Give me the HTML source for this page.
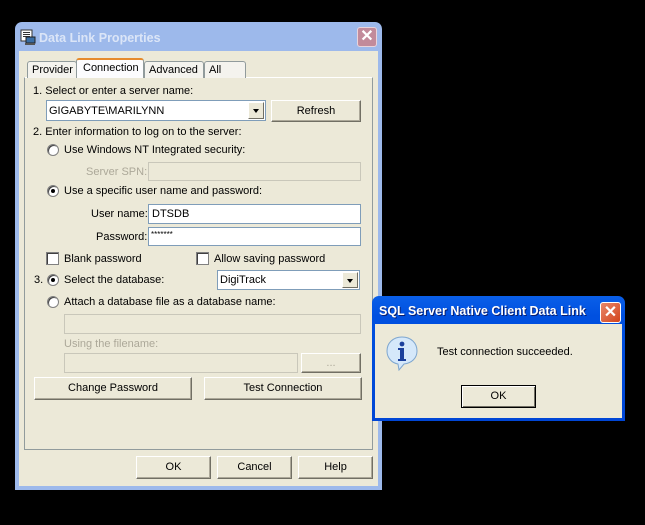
<!DOCTYPE html>
<html><head><meta charset="utf-8"><style>
*{box-sizing:border-box}
body{margin:0;width:645px;height:525px;background:#000;position:relative;overflow:hidden;font-family:"Liberation Sans",Tahoma,sans-serif;font-size:11px;color:#000}
.a{position:absolute}
.t{position:absolute;white-space:nowrap;line-height:13px}
.g{color:#aca899}
.box{position:absolute;background:#fff;border:1px solid #7f9db9}
.dis{position:absolute;background:#ece9d8;border:1px solid #c9c7ba}
.btn2{position:absolute;background:#ece9d8;border:1px solid;border-color:#fff #716f64 #716f64 #fff;box-shadow:inset -1px -1px 0 #aca899;text-align:center;font-size:11px}
.rad{position:absolute;width:12px;height:12px;border-radius:50%;background:#fff;border:1px solid #808080;box-shadow:inset 1px 1px 0 #404040}
.rad.on::after{content:"";position:absolute;left:3px;top:3px;width:4px;height:4px;border-radius:50%;background:#000}
.chk{position:absolute;width:13px;height:13px;background:#fff;border:1px solid #808080;box-shadow:inset 1px 1px 0 #404040}
.dd{position:absolute;right:1px;top:1px;bottom:1px;width:16px;background:#ece9d8;border:1px solid;border-color:#fff #716f64 #716f64 #fff}
.dd::after{content:"";position:absolute;left:4px;top:6px;border-left:3px solid transparent;border-right:3px solid transparent;border-top:4px solid #000}
</style></head><body>

<div class="a" style="left:15px;top:22px;width:367px;height:468px;background:#9db9eb;border-radius:7px 7px 0 0"></div>
<div class="a" style="left:19px;top:51px;width:359px;height:435px;background:#ece9d8"></div>
<div class="a" style="left:20px;top:29px;width:16px;height:16px">
<svg width="16" height="16"><rect x="1" y="1" width="11" height="11" fill="#fff" stroke="#333"/><rect x="3" y="3" width="7" height="1" fill="#333"/><rect x="3" y="5" width="7" height="1" fill="#333"/><rect x="3" y="7" width="7" height="1" fill="#333"/><rect x="6" y="8" width="9" height="6" fill="#3a6ea5" stroke="#222"/><rect x="5" y="14" width="10" height="2" fill="#555"/></svg></div>
<div class="t" style="left:39px;top:31px;font-size:12.5px;font-weight:bold;color:#dbe5f7;line-height:15px">Data Link Properties</div>
<div class="a" style="left:357px;top:27px;width:20px;height:20px;background:#c28b9b;border:1px solid #e9d4db;border-radius:3px;color:#fff;text-align:center;font-size:16px;line-height:18px;font-weight:bold">✕</div>

<div class="a" style="left:24px;top:77px;width:349px;height:373px;border:1px solid;border-color:#fff #919b9c #919b9c #919b9c;background:#ece9d8"></div>
<div class="a" style="left:27px;top:61px;width:50px;height:17px;border:1px solid #919b9c;border-bottom:none;background:#f4f3ee;border-radius:3px 3px 0 0"></div>
<div class="t" style="left:32px;top:64px">Provider</div>
<div class="a" style="left:76px;top:58px;width:68px;height:20px;border:1px solid #919b9c;border-bottom:none;border-top:2px solid #e68b2c;background:#fcfcfe;border-radius:3px 3px 0 0"></div>
<div class="t" style="left:83px;top:62px">Connection</div>
<div class="a" style="left:144px;top:61px;width:60px;height:17px;border:1px solid #919b9c;border-bottom:none;background:#f4f3ee;border-radius:3px 3px 0 0"></div>
<div class="t" style="left:149px;top:64px">Advanced</div>
<div class="a" style="left:204px;top:61px;width:42px;height:17px;border:1px solid #919b9c;border-bottom:none;background:#f4f3ee;border-radius:3px 3px 0 0"></div>
<div class="t" style="left:209px;top:64px">All</div>

<div class="t" style="left:33px;top:85px">1. Select or enter a server name:</div>
<div class="box" style="left:46px;top:100px;width:220px;height:21px"><div class="t" style="left:2px;top:4px">GIGABYTE\MARILYNN</div><div class="dd"></div></div>
<div class="btn2" style="left:271px;top:100px;width:90px;height:22px;line-height:20px">Refresh</div>
<div class="t" style="left:33px;top:126px">2. Enter information to log on to the server:</div>
<div class="rad" style="left:47px;top:144px"></div>
<div class="t" style="left:64px;top:144px">Use Windows NT Integrated security:</div>
<div class="t g" style="left:86px;top:166px">Server SPN:</div>
<div class="dis" style="left:148px;top:162px;width:213px;height:19px"></div>
<div class="rad on" style="left:47px;top:185px"></div>
<div class="t" style="left:64px;top:185px">Use a specific user name and password:</div>
<div class="t" style="left:91px;top:208px">User name:</div>
<div class="box" style="left:148px;top:204px;width:213px;height:20px"><div class="t" style="left:3px;top:3px">DTSDB</div></div>
<div class="t" style="left:96px;top:231px">Password:</div>
<div class="box" style="left:148px;top:227px;width:213px;height:19px"><div class="t" style="left:2px;top:0px;font-size:8px">*******</div></div>
<div class="chk" style="left:46px;top:252px"></div>
<div class="t" style="left:64px;top:253px">Blank password</div>
<div class="chk" style="left:196px;top:252px"></div>
<div class="t" style="left:214px;top:253px">Allow saving password</div>
<div class="t" style="left:34px;top:274px">3.</div>
<div class="rad on" style="left:47px;top:274px"></div>
<div class="t" style="left:64px;top:274px">Select the database:</div>
<div class="box" style="left:217px;top:270px;width:143px;height:20px"><div class="t" style="left:2px;top:3px">DigiTrack</div><div class="dd"></div></div>
<div class="rad" style="left:47px;top:296px"></div>
<div class="t" style="left:64px;top:296px">Attach a database file as a database name:</div>
<div class="dis" style="left:64px;top:314px;width:297px;height:20px"></div>
<div class="t g" style="left:64px;top:338px">Using the filename:</div>
<div class="dis" style="left:64px;top:353px;width:234px;height:20px"></div>
<div class="btn2 g" style="left:301px;top:353px;width:60px;height:20px;line-height:18px">...</div>
<div class="btn2" style="left:34px;top:377px;width:158px;height:23px;line-height:20px">Change Password</div>
<div class="btn2" style="left:204px;top:377px;width:158px;height:23px;line-height:20px">Test Connection</div>

<div class="btn2" style="left:136px;top:456px;width:75px;height:23px;line-height:20px">OK</div>
<div class="btn2" style="left:217px;top:456px;width:75px;height:23px;line-height:20px">Cancel</div>
<div class="btn2" style="left:298px;top:456px;width:75px;height:23px;line-height:20px">Help</div>

<div class="a" style="left:372px;top:296px;width:253px;height:125px;background:linear-gradient(#0a5fe8,#0050e0 20px,#0046d5);border-radius:7px 7px 0 0"></div>
<div class="a" style="left:375px;top:324px;width:247px;height:94px;background:#ece9d8"></div>
<div class="t" style="left:379px;top:304px;font-size:12.5px;font-weight:bold;color:#fff;line-height:15px;text-shadow:1px 1px 0 #0a1e6e">SQL Server Native Client Data Link</div>
<div class="a" style="left:600px;top:302px;width:21px;height:21px;background:linear-gradient(135deg,#e8876b,#d3441c);border:1px solid #fff;border-radius:3px;color:#fff;text-align:center;font-size:16px;line-height:19px;font-weight:bold">✕</div>
<svg class="a" style="left:385px;top:335px" width="34" height="36"><path d="M17 2C8 2 2 8 2 16c0 7 5 12 11 13l1 6 5-6c8-1 13-6 13-13C32 8 26 2 17 2z" fill="#d5e8fa" stroke="#7ea6cf"/><circle cx="17" cy="9" r="2.4" fill="#1a3f9c"/><path d="M13 13h6v11h2v2h-8v-2h2v-9h-2z" fill="#1a3f9c"/></svg>
<div class="t" style="left:437px;top:346px">Test connection succeeded.</div>
<div class="btn2" style="left:461px;top:385px;width:75px;height:23px;line-height:21px;border:1px solid #000;box-shadow:inset 1px 1px 0 #fff,inset -1px -1px 0 #716f64">OK</div>
</body></html>
